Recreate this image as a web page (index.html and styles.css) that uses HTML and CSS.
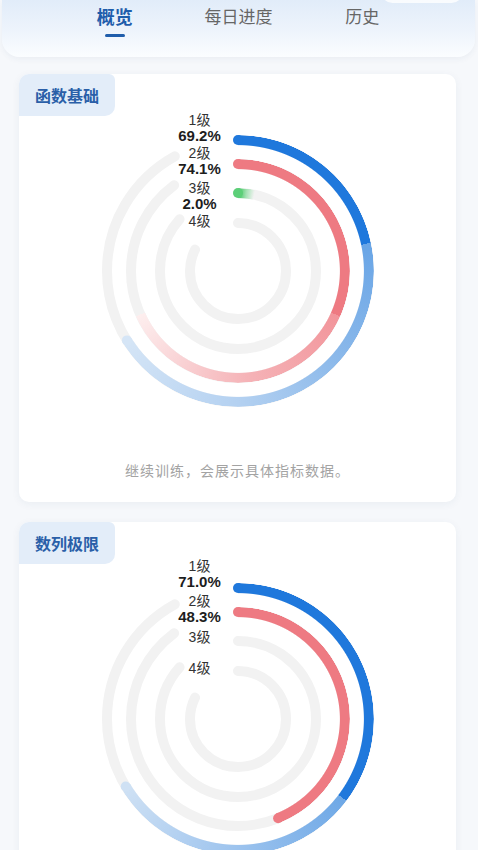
FILE: index.html
```html
<!DOCTYPE html>
<html lang="zh-CN">
<head>
<meta charset="utf-8">
<title>概览</title>
<link rel="stylesheet" href="styles.css">
</head>
<body>
<header class="hdr">
  <div class="hdr-pill"></div>
  <nav class="tabs">
    <div class="tab active"><span>概览</span><i class="bar"></i></div>
    <div class="tab"><span>每日进度</span></div>
    <div class="tab"><span>历史</span></div>
  </nav>
</header>

<section class="card">
  <div class="card-tag">函数基础</div>
  <div class="chart">
    <svg class="layer" viewBox="0 0 284 284">
      <g fill="none" stroke="#f2f2f2" stroke-width="10" stroke-linecap="round" transform="rotate(-90 142 142)">
        <circle cx="142" cy="142" r="131" stroke-dasharray="756.8 2000"/>
        <circle cx="142" cy="142" r="107" stroke-dasharray="603.2 2000"/>
        <circle cx="142" cy="142" r="78" stroke-dasharray="423.4 2000"/>
        <circle cx="142" cy="142" r="48" stroke-dasharray="248 2000"/>
      </g>
    </svg>
    <div class="ring r1 c1-blue"></div>
    <div class="ring r2 c1-red"></div>
    <div class="ring r3 c1-green"></div>
    <svg class="layer" viewBox="0 0 284 284">
      <circle cx="142" cy="11" r="5" fill="#1f78dc"/>
      <circle cx="142" cy="35" r="5" fill="#ee7a82"/>
      <circle cx="142" cy="64" r="5" fill="#5ccf78"/>
      <circle cx="30.9" cy="211.4" r="5" fill="#d5e5f6"/>
    </svg>
    <div class="lbl g1a"><div>1级</div><b>69.2%</b></div>
    <div class="lbl g2a"><div>2级</div><b>74.1%</b></div>
    <div class="lbl g3a"><div>3级</div><b>2.0%</b></div>
    <div class="lbl g4a"><div>4级</div></div>
  </div>
  <p class="note">继续训练，会展示具体指标数据。</p>
</section>

<section class="card">
  <div class="card-tag">数列极限</div>
  <div class="chart">
    <svg class="layer" viewBox="0 0 284 284">
      <g fill="none" stroke="#f2f2f2" stroke-width="10" stroke-linecap="round" transform="rotate(-90 142 142)">
        <circle cx="142" cy="142" r="131" stroke-dasharray="756.8 2000"/>
        <circle cx="142" cy="142" r="107" stroke-dasharray="603.2 2000"/>
        <circle cx="142" cy="142" r="78" stroke-dasharray="423.4 2000"/>
        <circle cx="142" cy="142" r="48" stroke-dasharray="248 2000"/>
      </g>
    </svg>
    <div class="ring r1 c2-blue"></div>
    <div class="ring r2 c2-red"></div>
    <svg class="layer" viewBox="0 0 284 284">
      <circle cx="142" cy="11" r="5" fill="#1f78dc"/>
      <circle cx="142" cy="35" r="5" fill="#ee7a82"/>
      <circle cx="182.1" cy="241.2" r="5" fill="#ee7a82"/>
      <circle cx="29.7" cy="209.5" r="5" fill="#cfe1f4"/>
    </svg>
    <div class="lbl g1b"><div>1级</div><b>71.0%</b></div>
    <div class="lbl g2b"><div>2级</div><b>48.3%</b></div>
    <div class="lbl g3b"><div>3级</div></div>
    <div class="lbl g4b"><div>4级</div></div>
  </div>
</section>
</body>
</html>
```

FILE: styles.css
```css
* { box-sizing: border-box; }
html, body { margin: 0; padding: 0; }
body {
  background: #f6f8fb;
  font-family: "Liberation Sans", "Noto Sans CJK SC", sans-serif;
  color: #333;
}

.hdr {
  position: relative;
  height: 57px;
  margin: 0 3px 0 2px;
  padding-top: 4px;
  background: linear-gradient(180deg, #e1ecf9 0%, #eef4fc 55%, #fbfdff 100%);
  border-radius: 0 0 18px 18px;
  box-shadow: 0 2px 6px rgba(40, 70, 120, 0.06);
}
.hdr-pill {
  position: absolute;
  top: -20px;
  right: 12px;
  width: 82px;
  height: 23px;
  border-radius: 12px;
  background: rgba(255, 255, 255, 0.8);
}
.tabs {
  display: flex;
  padding: 0 51px;
  font-family: "Noto Sans CJK SC", sans-serif;
}
.tab {
  flex: 1;
  display: flex;
  flex-direction: column;
  align-items: center;
  font-size: 17px;
  line-height: 24px;
  color: #666;
}
.tab.active {
  font-size: 18px;
  font-weight: 700;
  color: #1f5dab;
}
.tab .bar {
  display: block;
  width: 20px;
  height: 3px;
  margin-top: 6px;
  border-radius: 2px;
  background: #1f5dab;
}

.card {
  margin: 17px 22px 0 19px;
  background: #fff;
  border-radius: 10px;
  overflow: hidden;
  box-shadow: 0 2px 8px rgba(30, 60, 110, 0.06);
  padding-bottom: 22px;
}
.card + .card { margin-top: 20px; }
.card-tag {
  display: inline-block;
  height: 42px;
  line-height: 42px;
  padding: 0 16px;
  background: #e3edf9;
  color: #2a5fa8;
  font-family: "Noto Sans CJK SC", sans-serif;
  font-weight: 700;
  font-size: 16px;
  border-radius: 0 6px 10px 0;
}

.chart {
  position: relative;
  width: 284px;
  height: 284px;
  margin: 13px auto 0;
}
.layer {
  position: absolute;
  inset: 0;
  width: 284px;
  height: 284px;
}
.ring {
  position: absolute;
  border-radius: 50%;
  -webkit-mask: radial-gradient(closest-side, transparent calc(100% - 10.6px), #000 calc(100% - 9.6px), #000 calc(100% - 0.6px), transparent 100%);
  mask: radial-gradient(closest-side, transparent calc(100% - 10.6px), #000 calc(100% - 9.6px), #000 calc(100% - 0.6px), transparent 100%);
}
.r1 { inset: 6px; }
.r2 { inset: 30px; }
.r3 { inset: 59px; }

.c1-blue {
  background: conic-gradient(#1f78dc 0deg 78deg, #69a5e6 78deg, #8ab8ea 130deg, #b4d1f1 180deg, #d5e5f6 238deg, transparent 238deg);
}
.c1-red {
  background: conic-gradient(#ee7a82 0deg 114deg, #f2959b 114deg, #f5b3b7 175deg, #fad9db 220deg, #fdeeee 246deg, transparent 246deg);
}
.c1-green {
  background: conic-gradient(#5ccf78 0deg 2deg, #a3e1b2 6deg, rgba(242, 242, 242, 0.6) 12deg, transparent 12deg);
}
.c2-blue {
  background: conic-gradient(#1f78dc 0deg 127deg, #6ea8e6 127deg, #9cc3ee 180deg, #cfe1f4 239deg, transparent 239deg);
}
.c2-red {
  background: conic-gradient(#ee7a82 0deg 158deg, transparent 158deg);
}

.lbl {
  position: absolute;
  left: 60px;
  width: 88px;
  text-align: center;
  font-size: 14px;
  line-height: 16px;
  color: #333;
}
.lbl b {
  display: block;
  font-size: 15px;
  font-weight: 700;
  color: #1d1d1d;
}
.g1a { top: -17px; }
.g2a { top: 16px; }
.g3a { top: 51px; }
.g4a { top: 84px; }
.g1b { top: -19px; }
.g2b { top: 16px; }
.g3b { top: 52px; }
.g4b { top: 83px; }

.note {
  margin: 47px 0 0;
  text-align: center;
  font-family: "Noto Sans CJK SC", sans-serif;
  font-size: 14px;
  line-height: 20px;
  letter-spacing: 1px;
  color: #a3a3a3;
}
```
